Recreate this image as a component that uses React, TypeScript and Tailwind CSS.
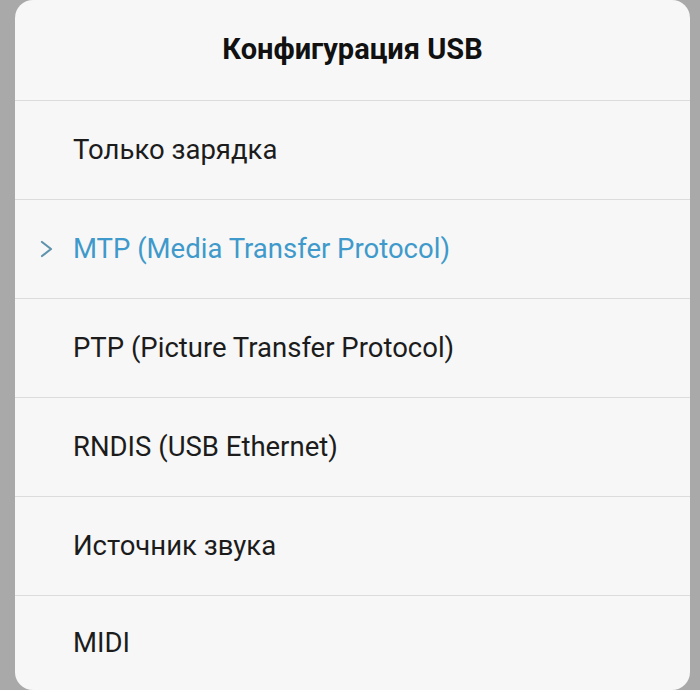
const options = [
  { label: 'Только зарядка', active: false },
  { label: 'MTP (Media Transfer Protocol)', active: true },
  { label: 'PTP (Picture Transfer Protocol)', active: false },
  { label: 'RNDIS (USB Ethernet)', active: false },
  { label: 'Источник звука', active: false },
  { label: 'MIDI', active: false },
];

function Chevron() {
  return (
    <svg width="14" height="18" viewBox="0 0 14 18" fill="none" className="absolute left-[25px] top-1/2 -translate-y-1/2">
      <path d="M2 2 L11 9 L2 16" stroke="#5f93ad" strokeWidth="2.2" strokeLinecap="round" strokeLinejoin="round" />
    </svg>
  );
}

export default function App() {
  return (
    <div className="w-[700px] h-[690px] bg-[#a9a9a9] flex overflow-hidden" style={{ fontFamily: 'Roboto, "Noto Sans", sans-serif' }}>
      <div className="ml-[15px] mr-[10px] flex-1 bg-[#f7f7f7] rounded-[18px] flex flex-col">
        <div className="h-[101px] shrink-0 flex items-center justify-center border-b border-[#dcdcdc]">
          <h1 className="text-[29px] font-bold text-[#111]">Конфигурация USB</h1>
        </div>
        {options.map((o, i) => (
          <div
            key={o.label}
            className={`relative flex items-center pl-[58px] ${i < options.length - 1 ? 'h-[99px] shrink-0 border-b border-[#dcdcdc]' : 'flex-1'}`}
          >
            {o.active && <Chevron />}
            <span className={`text-[27.5px] ${o.active ? 'text-[#3f9acb]' : 'text-[#1c1c1c]'}`}>{o.label}</span>
          </div>
        ))}
      </div>
    </div>
  );
}
